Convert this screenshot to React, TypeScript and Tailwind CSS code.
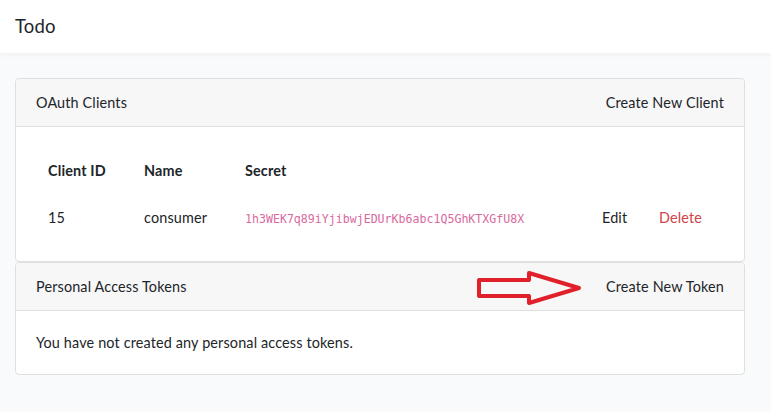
type Client = {
  id: number;
  name: string;
  secret: string;
};

const clients: Client[] = [
  { id: 15, name: 'consumer', secret: '1h3WEK7q89iYjibwjEDUrKb6abc1Q5GhKTXGfU8X' },
];

// red hand-drawn pointer in the tokens header
function Arrow() {
  return (
    <svg className="absolute left-0 top-0 overflow-visible" width="730" height="48">
      <polygon
        points="463,17 513,17 513,10 563,25 513,40 513,33 463,33"
        fill="none"
        stroke="#e0202b"
        strokeWidth="4"
        strokeLinejoin="round"
      />
    </svg>
  );
}

export default function App() {
  return (
    <div
      className="min-h-[412px] bg-[#f8fafc] text-[14.4px] leading-[1.6] tracking-[0.15px] text-[#212529]"
      style={{ fontFamily: 'Lato, "Noto Sans", sans-serif' }}
    >
      <nav className="h-[53px] bg-white shadow-[0_2px_4px_rgba(0,0,0,0.04)] flex items-center px-[15px]">
        <span className="text-[18.5px]">Todo</span>
      </nav>

      <main className="pt-[25px] px-[15px]">
        <div className="w-[730px]">
          {/* OAuth clients */}
          <div className="bg-white border border-[#dfdfdf] rounded-[4px]">
            <div className="h-[48px] bg-[#f7f7f7] border-b border-[#dfdfdf] rounded-t-[4px] px-5 flex items-center justify-between">
              <span>OAuth Clients</span>
              <span>Create New Client</span>
            </div>
            <div className="p-5">
              <table className="w-full text-left">
                <thead>
                  <tr className="h-[47px]">
                    <th className="px-3 w-[96px] font-bold">Client ID</th>
                    <th className="px-3 w-[101px] font-bold">Name</th>
                    <th className="px-3 w-[357px] font-bold">Secret</th>
                    <th className="px-3 w-[57px]"></th>
                    <th className="px-3"></th>
                  </tr>
                </thead>
                <tbody>
                  {clients.map((c) => (
                    <tr key={c.id} className="h-[47px]">
                      <td className="px-3">{c.id}</td>
                      <td className="px-3">{c.name}</td>
                      <td className="px-3">
                        <code
                          className="text-[11.6px] tracking-normal text-[#d96aa0]"
                          style={{ fontFamily: '"DejaVu Sans Mono", monospace' }}
                        >
                          {c.secret}
                        </code>
                      </td>
                      <td className="px-3">Edit</td>
                      <td className="px-3 text-[#cf4349]">Delete</td>
                    </tr>
                  ))}
                </tbody>
              </table>
            </div>
          </div>

          {/* Personal access tokens */}
          <div className="bg-white border border-[#dfdfdf] rounded-[4px]">
            <div className="relative h-[48px] bg-[#f7f7f7] border-b border-[#dfdfdf] rounded-t-[4px] px-5 flex items-center justify-between">
              <span>Personal Access Tokens</span>
              <span>Create New Token</span>
              <Arrow />
            </div>
            <div className="p-5">
              <p>You have not created any personal access tokens.</p>
            </div>
          </div>
        </div>
      </main>
    </div>
  );
}
